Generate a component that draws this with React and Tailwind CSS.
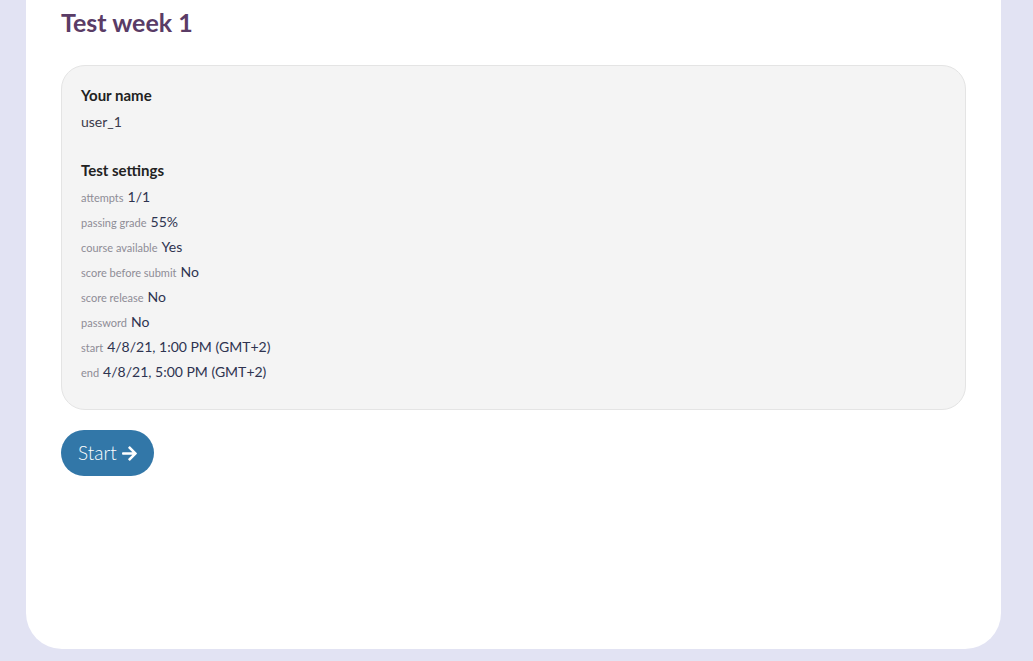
import React from "react";

const settings = [
  ["attempts", "1/1"],
  ["passing grade", "55%"],
  ["course available", "Yes"],
  ["score before submit", "No"],
  ["score release", "No"],
  ["password", "No"],
  ["start", "4/8/21, 1:00 PM (GMT+2)"],
  ["end", "4/8/21, 5:00 PM (GMT+2)"],
];

const ArrowIcon = () => (
  <svg viewBox="0 0 448 512" className="w-[15px] h-[17px] fill-white">
    <path d="M190.5 66.9l22.2-22.2c9.4-9.4 24.6-9.4 33.9 0L441 239c9.4 9.4 9.4 24.6 0 33.9L246.6 467.3c-9.4 9.4-24.6 9.4-33.9 0l-22.2-22.2c-9.5-9.5-9.3-25 .4-34.3L311.4 296H24c-13.3 0-24-10.7-24-24v-32c0-13.3 10.7-24 24-24h287.4L190.9 101.2c-9.8-9.3-10-24.8-.4-34.3z" />
  </svg>
);

const App = () => {
  return (
    <div className="min-h-screen bg-[#e2e3f3] pl-[26px] pb-3 font-['Lato',sans-serif]">
      <div className="w-[975px] h-[649px] bg-white rounded-b-[36px] px-[35px] pt-[7px]">
        <h1 className="text-[25px] leading-[30px] font-bold text-[#5a3c66]">Test week 1</h1>

        <div className="mt-[28px] bg-[#f4f4f4] border border-[#e4e4e4] rounded-[24px] px-[19px] pt-[19px] pb-[25px]">
          <h2 className="text-[15px] leading-[20px] font-bold text-[#222]">Your name</h2>
          <p className="mt-[7px] text-[14px] leading-[20px] text-[#3a3a4a]">user_1</p>

          <h2 className="mt-[28px] text-[15px] leading-[20px] font-bold text-[#222]">Test settings</h2>
          <div className="mt-[4px] flex flex-col">
            {settings.map(([label, value]) => (
              <div key={label} className="h-[25px] leading-[25px] flex items-baseline gap-[4px]">
                <span className="text-[11px] text-[#8e8c96]">{label}</span>
                <span className="text-[14px] text-[#2e3350]">{value}</span>
              </div>
            ))}
          </div>
        </div>

        <button className="mt-[20px] h-[46px] px-[17px] rounded-full bg-[#3277a8] text-white text-[19px] font-light flex items-center gap-[5px]">
          Start
          <ArrowIcon />
        </button>
      </div>
    </div>
  );
};

export default App;
